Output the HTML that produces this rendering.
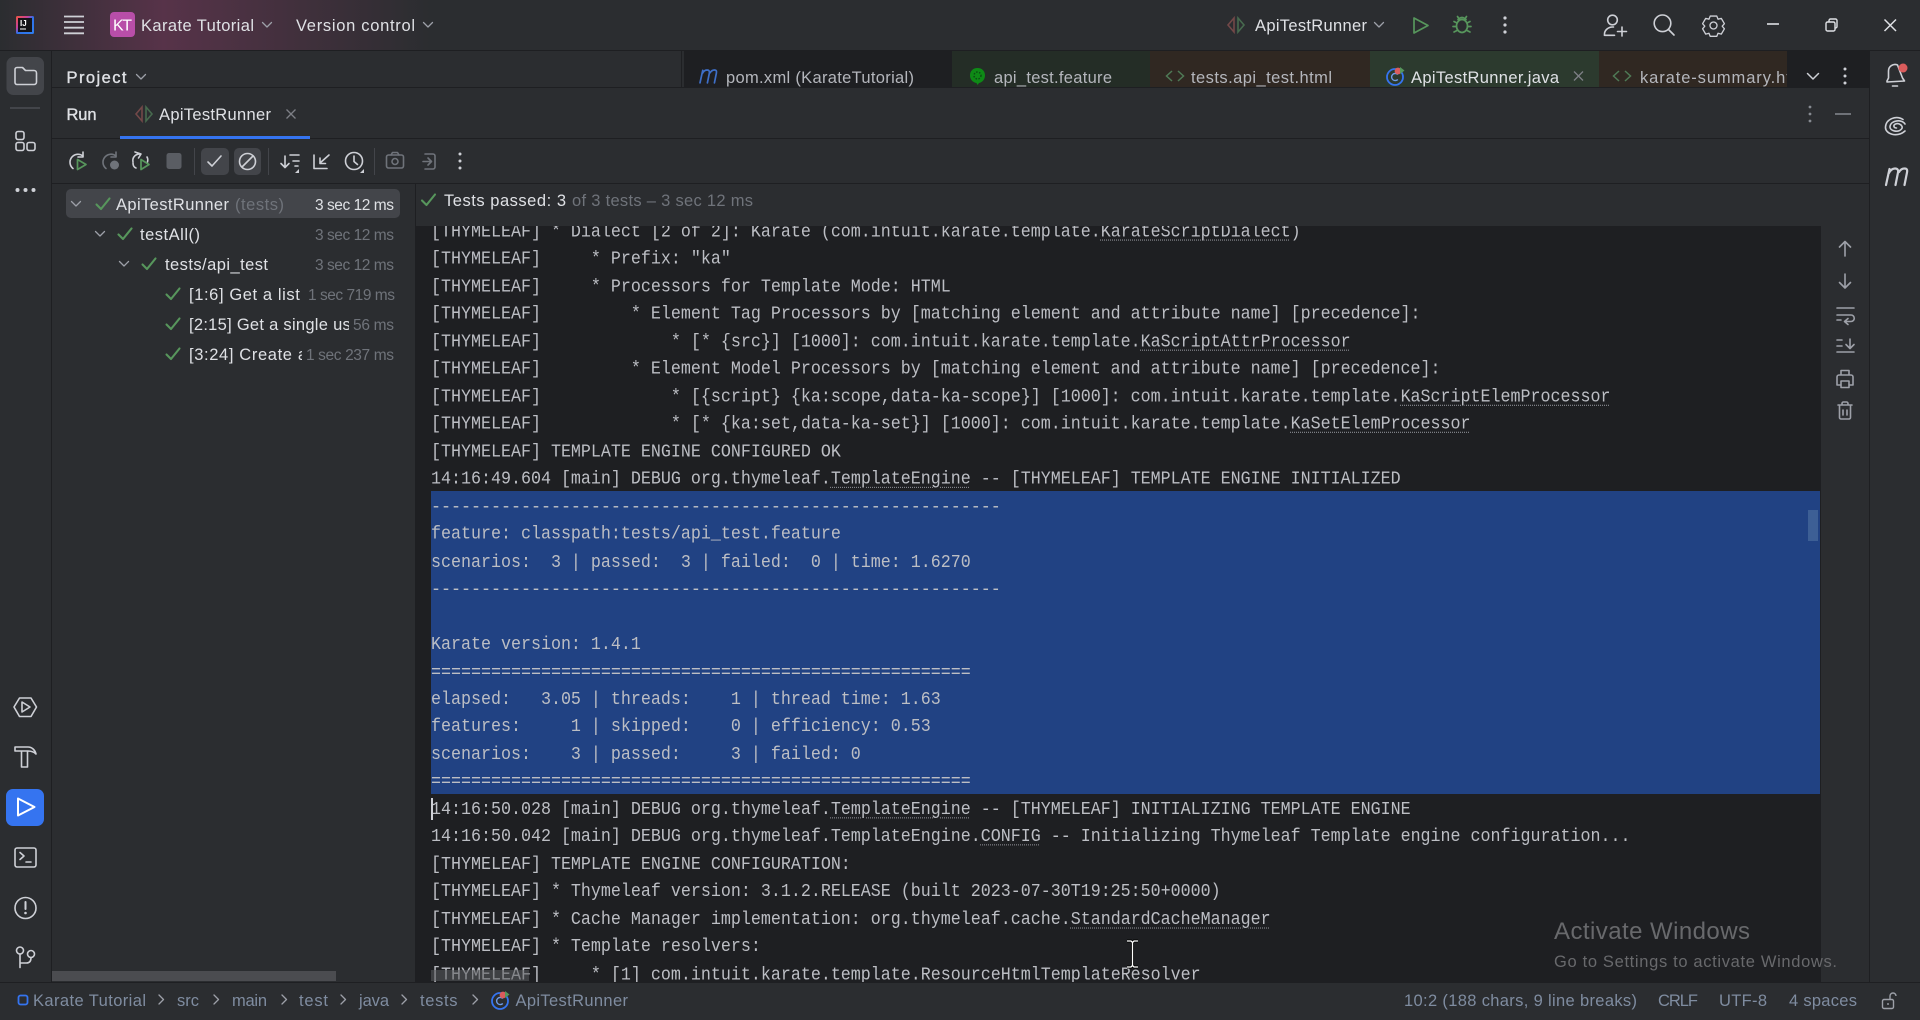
<!DOCTYPE html>
<html><head><meta charset="utf-8"><title>ApiTestRunner</title>
<style>
html,body{margin:0;padding:0;background:#2b2d30;width:1920px;height:1020px;overflow:hidden}
svg{position:absolute;left:0;top:0;display:block}
svg text{font-family:"Liberation Sans",sans-serif;font-size:16.5px;fill:#dfe1e5;white-space:pre}
.dim{fill:#b4b6bc}.g{fill:#6f737a}.st{fill:#7f8ca0}
.med{stroke:#dfe1e5;stroke-width:.35px}
.ic{fill:none;stroke:#ced0d6;stroke-width:1.6;stroke-linecap:round;stroke-linejoin:round}
.id{fill:none;stroke:#6f737a;stroke-width:1.6;stroke-linecap:round;stroke-linejoin:round}
.ck{fill:none;stroke:#57965c;stroke-width:2.1;stroke-linecap:round;stroke-linejoin:round}
.gr{fill:none;stroke:#57965c;stroke-width:1.7;stroke-linecap:round;stroke-linejoin:round}
.cr{fill:none;stroke:#9da0a8;stroke-width:1.3;stroke-linecap:round;stroke-linejoin:round}
#con{position:absolute;left:416px;top:226px;width:1405px;height:756px;background:#1e1f22;overflow:hidden}
#sel{position:absolute;left:15px;top:265px;width:1389px;height:302.5px;background:#214283}
#txt{position:absolute;left:15px;top:-7.5px;margin:0;font:16.67px/25.463px "Liberation Mono",monospace;color:#bcbec4;white-space:pre;transform:scaleY(1.08);transform-origin:0 0}
#txt u{text-decoration:underline dotted #8a8c92 1px;text-underline-offset:3px}
</style></head><body>
<svg width="1920" height="1020" viewBox="0 0 1920 1020">
<defs>
<linearGradient id="tg" gradientUnits="userSpaceOnUse" x1="0" y1="0" x2="430" y2="0"><stop offset="0" stop-color="#2b2d30"/><stop offset=".38" stop-color="#573349"/><stop offset="1" stop-color="#2b2d30"/></linearGradient>
<linearGradient id="lg" x1="0" y1="0" x2="1" y2="1"><stop offset="0" stop-color="#f0563f"/><stop offset=".35" stop-color="#c6409a"/><stop offset=".5" stop-color="#2f6fe8"/><stop offset="1" stop-color="#2f7ff0"/></linearGradient>
<path id="ck" class="ck" d="M-6.5 0.5L-2 5L6.5-5.5"/>
<path id="car" class="cr" d="M-4.5-2.5L0 2L4.500-2.500"/>
<g id="html"><path d="M-3-5L-8.500 0L-3 5M3-5L8.500 0L3 5" fill="none" stroke="#4f7a56" stroke-width="1.500"/></g>
<g id="cls"><circle cx="0" cy="0" r="8" fill="none" stroke="#3574f0" stroke-width="1.800"/><path d="M2.800-2.500A3.600 3.600 0 1 0 2.800 2.500" fill="none" stroke="#6f9be8" stroke-width="1.400"/><circle cx="3" cy="-6" r="3.400" fill="#db5c5c"/><path d="M5-10L9.500-6.500L5-3z" fill="#57965c"/></g>
<g id="runner"><path d="M-2-7L-8 0L-2 7z" fill="none" stroke="#734848" stroke-width="1.600"/><path d="M2-7L8 0L2 7z" fill="none" stroke="#476a4e" stroke-width="1.600"/></g>
<clipPath id="c1"><rect x="180" y="280" width="124" height="30"/></clipPath>
<clipPath id="c2"><rect x="180" y="310" width="169" height="30"/></clipPath>
<clipPath id="c3"><rect x="180" y="340" width="122" height="30"/></clipPath>
<clipPath id="c4"><rect x="1630" y="51" width="157" height="36"/></clipPath>
</defs>
<rect width="1920" height="1020" fill="#2b2d30"/>
<rect width="430" height="50" fill="url(#tg)"/>
<rect y="50" width="1920" height="1" fill="#1e1f22"/>
<rect x="51" y="51" width="1" height="932" fill="#1e1f22"/>
<rect x="1869" y="51" width="1" height="932" fill="#1e1f22"/>
<rect x="52" y="87" width="1817" height="1" fill="#1e1f22"/>
<rect x="52" y="138" width="1817" height="1" fill="#1e1f22"/>
<rect x="52" y="183" width="1817" height="1" fill="#1e1f22"/>
<rect x="415" y="184" width="1" height="798" fill="#1e1f22"/>
<rect y="982" width="1920" height="1" fill="#1e1f22"/>

<!-- title bar -->
<rect x="16" y="16" width="18" height="18" rx="1.500" fill="url(#lg)"/><rect x="18" y="18" width="14" height="14" fill="#141418"/>
<text x="20" y="26" style="font-size:8px;font-weight:bold;fill:#fff">IJ</text><rect x="20" y="28.500" width="6" height="1" fill="#fff"/>
<path d="M64 16.500H84M64 22H84M64 27.700H84M64 33.300H84" fill="none" stroke="#ced0d6" stroke-width="1.800"/>
<rect x="110" y="12" width="25" height="25" rx="4" fill="#b84ea8"/>
<text x="113" y="30.500" style="font-size:16px;fill:#fff" textLength="19">KT</text>
<text x="141" y="31" textLength="113">Karate Tutorial</text><use href="#car" x="267" y="25"/>
<text x="296" y="31" textLength="119">Version control</text><use href="#car" x="428" y="25"/>
<use href="#runner" x="1236" y="25"/>
<text x="1255" y="31" textLength="112">ApiTestRunner</text><use href="#car" x="1379" y="25"/>
<path class="gr" d="M1414 18L1428 25.500L1414 33z"/>
<g class="gr"><ellipse cx="1462" cy="26" rx="5.500" ry="6.500"/><path d="M1458 19.500q4-4 8 0M1457.500 16.500l2 3M1466.500 16.500l-2 3M1454 21.500l3 1.500M1470 21.500l-3 1.500M1453 26.500h3.500M1471 26.500h-3.500M1454 32l3-1.500M1470 32l-3-1.500"/></g>
<circle cx="1505" cy="18" r="1.600" fill="#ced0d6"/><circle cx="1505" cy="25" r="1.600" fill="#ced0d6"/><circle cx="1505" cy="32" r="1.600" fill="#ced0d6"/>
<g class="ic" transform="translate(-1.500 0)"><circle cx="1614" cy="20" r="4.800"/><path d="M1606 35v-1c0-4 4-7 8-7h1M1619 31.500h9M1623.500 27v9"/><path d="M1606 35.300h10"/></g>
<g class="ic"><circle cx="1662.500" cy="23.300" r="8.300"/><path d="M1668.500 29.500l5.500 5.500"/></g>
<g class="ic" transform="translate(1713.500 25.500) scale(.82) translate(-1714 -26)"><path d="M1710 14.500h8l1.500 3.800 4-1 3.800 6.500-2.700 3 2.700 3.200-3.800 6.500-4-1-1.500 3.700h-8l-1.500-3.700-4 1-3.800-6.500 2.700-3.200-2.700-3 3.800-6.500 4 1z"/><circle cx="1714" cy="26" r="4.300"/></g>
<path d="M1767 24h12" stroke="#dfe1e5" stroke-width="1.600"/>
<g fill="none" stroke="#dfe1e5" stroke-width="1.400"><rect x="1826" y="22" width="9" height="9" rx="1.500"/><path d="M1829 21.500v-1a1.500 1.500 0 0 1 1.500-1.500h5a1.500 1.500 0 0 1 1.500 1.500v6a1.500 1.500 0 0 1-1.500 1.500"/></g>
<path d="M1884.500 19.500l11.500 11.500M1896 19.500l-11.500 11.500" stroke="#dfe1e5" stroke-width="1.500"/>

<!-- left rail -->
<rect x="6.500" y="57" width="37.500" height="38" rx="7" fill="#43454a"/>
<path class="ic" d="M15 69.500a2 2 0 0 1 2-2h5.500l3 3H34a2.500 2.500 0 0 1 2.500 2.500v9a2.500 2.500 0 0 1-2.500 2.500H17a2 2 0 0 1-2-2z"/>
<rect x="10" y="107" width="30" height="2" fill="#43454a"/>
<g class="ic"><rect x="16" y="131.500" width="8" height="8" rx="2"/><rect x="16" y="142.500" width="8" height="8" rx="2"/><rect x="27" y="142.500" width="8" height="8" rx="2"/></g>
<circle cx="17.500" cy="190" r="2" fill="#ced0d6"/><circle cx="25.500" cy="190" r="2" fill="#ced0d6"/><circle cx="33.500" cy="190" r="2" fill="#ced0d6"/>
<g class="ic"><path d="M19.500 698h11.500l5.500 9-5.500 9.500H19.500L14 707z"/><path d="M22 702l8 5-8 5z"/></g>
<path class="ic" d="M15 747h13c4 0 7 3 8 7-2-2-5-3-8-3h-13zM21.500 751.500v15.500h6v-15.500"/>
<rect x="6" y="789" width="38" height="37" rx="7" fill="#3574f0"/>
<path d="M18 798.500v17L34.500 807z" fill="none" stroke="#fff" stroke-width="2" stroke-linejoin="round"/>
<g class="ic"><rect x="15" y="848" width="21" height="19" rx="2"/><path d="M20 852.500l4 3.500-4 3.500M26 862h5"/></g>
<g class="ic"><circle cx="25.500" cy="908" r="10.500"/></g><path d="M25.500 902v7" stroke="#ced0d6" stroke-width="2" stroke-linecap="round"/><circle cx="25.500" cy="913" r="1.300" fill="#ced0d6"/>
<g class="ic"><circle cx="20" cy="950.500" r="3.500"/><circle cx="31" cy="954" r="3.500"/><path d="M20 954v13.500M20 963h6.500q4.500 0 4.500-5.500"/></g>

<!-- project header and tabs -->
<text class="med" x="66.500" y="83" textLength="60">Project</text><use href="#car" x="141" y="77"/>
<rect x="684" y="51" width="268" height="36" fill="#1e1f22"/>
<rect x="681" y="51" width="1" height="36" fill="#1e1f22"/>
<rect x="952" y="51" width="198" height="36" fill="#242d26"/>
<rect x="1150" y="51" width="220" height="36" fill="#302822"/>
<rect x="1370" y="51" width="229" height="36" fill="#2c3a2e"/>
<rect x="1599" y="51" width="188" height="36" fill="#302822"/>
<rect x="1787" y="51" width="82" height="36" fill="#1e1f22"/>
<path transform="translate(700 70) scale(.78) translate(-1886 -168.500)" d="M1886 185l3.500-16M1889 173c1.500-3 4-4.500 6-4.500 2.500 0 3.500 1.500 3 4l-2.500 12.500M1899 172c1.500-2.500 3.500-3.500 5.500-3.500 2.500 0 3 1.500 2.500 4l-2.500 12.500" fill="none" stroke="#3e6fc8" stroke-width="2.200" stroke-linecap="round"/>
<text class="dim" x="726" y="83" textLength="188">pom.xml (KarateTutorial)</text>
<path d="M977.500 68c4.500 0 7.500 3 7.500 7.500 0 4-3 7-6 7.500l-1.500 2-1-2c-3.500-.5-6.500-3.500-6.500-7.500 0-4.500 3-7.500 7.500-7.500z" fill="#0e8a16"/><circle cx="977.500" cy="75.500" r="3.500" fill="none" stroke="#0a4d12" stroke-width="1.500" stroke-dasharray="1.500 1.500"/>
<text class="dim" x="994" y="83" textLength="118">api_test.feature</text>
<use href="#html" x="1175" y="76"/>
<text class="dim" x="1191" y="83" textLength="141">tests.api_test.html</text>
<use href="#cls" x="1395" y="77"/>
<text x="1411" y="83" textLength="148">ApiTestRunner.java</text>
<path d="M1574 71.500l9 9M1583 71.500l-9 9" stroke="#7d7f85" stroke-width="1.300"/>
<use href="#html" x="1622" y="76"/>
<text class="dim" x="1640" y="83" textLength="170" clip-path="url(#c4)">karate-summary.html</text>
<path class="cr" style="stroke:#ced0d6;stroke-width:1.500" d="M1807.500 73.500l5.500 5.500 5.500-5.500"/>
<circle cx="1845" cy="69" r="1.500" fill="#ced0d6"/><circle cx="1845" cy="76" r="1.500" fill="#ced0d6"/><circle cx="1845" cy="83" r="1.500" fill="#ced0d6"/>

<!-- right rail -->
<g class="ic"><path d="M1887 82v-1l1.500-3v-7a6.500 6.500 0 0 1 9-6l5 13 2 3z"/><path d="M1892.500 86h5"/></g>
<circle cx="1903" cy="68" r="4.500" fill="#db5c5c"/>
<g class="ic"><path d="M1903 119.500C1896 115 1886 119 1885.500 127C1885 134 1897 138 1905 131"/><path d="M1905 124C1902 119 1891 120 1890 126.500C1889.500 131 1898 133 1901.500 129C1904 126 1899 122.500 1895.500 124C1893 125 1893.500 128 1896.500 128"/></g>
<path d="M1886 185l3.500-16M1889 173c1.500-3 4-4.500 6-4.500 2.500 0 3.500 1.500 3 4l-2.500 12.500M1899 172c1.500-2.500 3.500-3.500 5.500-3.500 2.500 0 3 1.500 2.500 4l-2.500 12.500" fill="none" stroke="#ced0d6" stroke-width="2.200" stroke-linecap="round"/>

<!-- run tabs -->
<text class="med" x="66.500" y="120" textLength="30">Run</text>
<use href="#runner" x="144" y="114"/>
<text x="159" y="120" textLength="112">ApiTestRunner</text>
<path d="M286.500 109.500l9 9M295.500 109.500l-9 9" stroke="#7d7f85" stroke-width="1.300"/>
<rect x="120" y="136" width="190" height="3" fill="#3574f0"/>
<circle cx="1810" cy="107" r="1.400" fill="#868a91"/><circle cx="1810" cy="114" r="1.400" fill="#868a91"/><circle cx="1810" cy="121" r="1.400" fill="#868a91"/>
<path d="M1835 114h16" stroke="#868a91" stroke-width="1.500"/>

<!-- toolbar -->
<g class="ic"><path d="M83 156a8 8 0 1 0-10 12.500"/><path d="M83 152v5h-5"/></g><path class="gr" d="M77.500 159.500l8.500 5-8.500 5z"/>
<g class="id"><path d="M116 156a8 8 0 1 0-10 12.500"/><path d="M116 152v5h-5"/></g><circle cx="114.500" cy="165" r="4.500" fill="#6f737a"/>
<g class="ic"><path d="M141 154c-5-.5-9 3-8 8M135 152l6 2-2.500 4M147 157c1 1.500 1 3 .5 5"/><path d="M136 168c-3-1-3-4-3-5"/></g><path class="gr" d="M141 159.500l8 5-8 5z"/>
<rect x="166.500" y="153" width="15" height="16" rx="2.500" fill="#5a5d63"/>
<rect x="194" y="148" width="1" height="27" fill="#43454a"/>
<rect x="201" y="148" width="28" height="27" rx="5" fill="#43454a"/>
<path class="ic" d="M208 162l4 4 9-10"/>
<rect x="234" y="148" width="27" height="27" rx="5" fill="#43454a"/>
<g class="ic"><circle cx="247.500" cy="161.500" r="8"/><path d="M242 167l11-11"/></g>
<rect x="268" y="148" width="1" height="27" fill="#43454a"/>
<g class="ic"><path d="M285 156v11M281 163.500l4 4 4-4M290 155h9M293 161h6M295 166h3"/></g><path d="M295 173l4-4v4z" fill="#ced0d6"/>
<g class="ic"><path d="M314 155v13.500h13M329 155l-9 8M320 158v5.500h5.500"/></g>
<g class="ic"><circle cx="354" cy="161" r="8.500"/><path d="M354 156v5.500l3.500 3"/></g><path d="M360 173l4-4v4z" fill="#ced0d6"/>
<rect x="374" y="148" width="1" height="27" fill="#43454a"/>
<g class="id"><rect x="386.500" y="155" width="17" height="13" rx="2"/><circle cx="395" cy="161.500" r="3"/><path d="M391 155l1.500-2.500h5L399 155"/></g>
<g class="id"><path d="M425 154h8a2 2 0 0 1 2 2v11a2 2 0 0 1-2 2h-8M423 161.500h8M428 158l3.500 3.500-3.500 3.500"/></g>
<circle cx="460" cy="154" r="1.500" fill="#ced0d6"/><circle cx="460" cy="161" r="1.500" fill="#ced0d6"/><circle cx="460" cy="168" r="1.500" fill="#ced0d6"/>

<!-- tree -->
<rect x="66" y="189" width="334" height="29" rx="5" fill="#43454a"/>
<use href="#car" x="76" y="204"/><use href="#ck" x="103" y="204"/>
<text x="116" y="210" textLength="113">ApiTestRunner</text><text class="g" x="235" y="210" textLength="49">(tests)</text>
<text x="315" y="210" style="font-size:15.500px" textLength="79">3 sec 12 ms</text>
<use href="#car" x="100" y="234"/><use href="#ck" x="125" y="234"/>
<text x="140" y="240" textLength="60">testAll()</text><text class="g" x="315" y="240" style="font-size:15.500px" textLength="79">3 sec 12 ms</text>
<use href="#car" x="124" y="264"/><use href="#ck" x="149" y="264"/>
<text x="165" y="270" textLength="103">tests/api_test</text><text class="g" x="315" y="270" style="font-size:15.500px" textLength="79">3 sec 12 ms</text>
<use href="#ck" x="173" y="294"/>
<text x="189" y="300" clip-path="url(#c1)" textLength="131">[1:6] Get a list of</text><text class="g" x="308" y="300" style="font-size:15.500px" textLength="87">1 sec 719 ms</text>
<use href="#ck" x="173" y="324"/>
<text x="189" y="330" clip-path="url(#c2)" textLength="177">[2:15] Get a single user</text><text class="g" x="353" y="330" style="font-size:15.500px" textLength="41">56 ms</text>
<use href="#ck" x="173" y="354"/>
<text x="189" y="360" clip-path="url(#c3)" textLength="118">[3:24] Create a</text><text class="g" x="306" y="360" style="font-size:15.500px" textLength="88">1 sec 237 ms</text>
<rect x="52" y="971" width="284" height="10" fill="#4b4c50"/>

<!-- results header -->
<use href="#ck" x="428.500" y="200"/>
<text x="444" y="206" textLength="122">Tests passed: 3</text>
<text class="g" x="572" y="206" textLength="181">of 3 tests – 3 sec 12 ms</text>

<!-- right tools -->
<g class="ic" style="stroke:#9da0a8"><path d="M1845 256v-14M1839.500 247l5.500-5.500 5.500 5.500"/><path d="M1845 274v14M1839.500 282.500l5.500 5.500 5.500-5.500"/>
<path d="M1837 308h17M1837 315h14a3 3 0 0 1 0 6.500h-6M1848 318.500l-3.500 3 3.500 3M1837 320h4"/>
<path d="M1837 340h5M1837 346h5M1837 352h17M1850 339v9M1846 344.500l4 4 4-4"/>
<path d="M1841 375v-4.500h8v4.500M1841 385h-4v-8a2 2 0 0 1 2-2h12a2 2 0 0 1 2 2v8h-4M1841 381h8v6.500h-8z"/>
<path d="M1838 405h14M1842 405v-1.500a1.500 1.500 0 0 1 1.500-1.500h3a1.500 1.500 0 0 1 1.500 1.500v1.500M1839.500 405.500v12a1.500 1.500 0 0 0 1.500 1.500h8a1.500 1.500 0 0 0 1.500-1.500v-12M1843 410v5M1847 410v5"/></g>

<!-- status bar -->
<rect x="18.500" y="995.500" width="9" height="9" rx="2" fill="none" stroke="#3574f0" stroke-width="1.800"/>
<text class="st" x="33" y="1006" textLength="113">Karate Tutorial</text>
<text class="st" x="177" y="1006" textLength="22">src</text>
<text class="st" x="232" y="1006" textLength="35">main</text>
<text class="st" x="299" y="1006" textLength="29">test</text>
<text class="st" x="359" y="1006" textLength="30">java</text>
<text class="st" x="420" y="1006" textLength="37.500">tests</text>
<text class="st" x="515.500" y="1006" textLength="112.500">ApiTestRunner</text>
<text class="st" x="1404" y="1006" textLength="233">10:2 (188 chars, 9 line breaks)</text>
<text class="st" x="1658" y="1006" textLength="40">CRLF</text>
<text class="st" x="1719" y="1006" textLength="48">UTF-8</text>
<text class="st" x="1789" y="1006" textLength="68">4 spaces</text>
<g class="cr"><path d="M159 995l4.500 4.500-4.500 4.500M214 995l4.500 4.500-4.500 4.500M282 995l4.500 4.500-4.500 4.500M341 995l4.500 4.500-4.500 4.500M402 995l4.500 4.500-4.500 4.500M473 995l4.500 4.500-4.500 4.500"/></g>
<use href="#cls" x="500" y="1001"/>
<g fill="none" stroke="#9da0a8" stroke-width="1.400"><rect x="1882.500" y="999.500" width="11" height="9" rx="1.500"/><path d="M1890 999.500v-3.500a3 3 0 0 1 6 0"/><path d="M1888 1003v2"/></g>
</svg>

<div id="con"><div id="sel"></div><pre id="txt">[THYMELEAF] * Dialect [2 of 2]: Karate (com.intuit.karate.template.<u>KarateScriptDialect</u>)
[THYMELEAF]     * Prefix: "ka"
[THYMELEAF]     * Processors for Template Mode: HTML
[THYMELEAF]         * Element Tag Processors by [matching element and attribute name] [precedence]:
[THYMELEAF]             * [* {src}] [1000]: com.intuit.karate.template.<u>KaScriptAttrProcessor</u>
[THYMELEAF]         * Element Model Processors by [matching element and attribute name] [precedence]:
[THYMELEAF]             * [{script} {ka:scope,data-ka-scope}] [1000]: com.intuit.karate.template.<u>KaScriptElemProcessor</u>
[THYMELEAF]             * [* {ka:set,data-ka-set}] [1000]: com.intuit.karate.template.<u>KaSetElemProcessor</u>
[THYMELEAF] TEMPLATE ENGINE CONFIGURED OK
14:16:49.604 [main] DEBUG org.thymeleaf.<u>TemplateEngine</u> -- [THYMELEAF] TEMPLATE ENGINE INITIALIZED
---------------------------------------------------------
feature: classpath:tests/api_test.feature
scenarios:  3 | passed:  3 | failed:  0 | time: 1.6270
---------------------------------------------------------

Karate version: 1.4.1
======================================================
elapsed:   3.05 | threads:    1 | thread time: 1.63
features:     1 | skipped:    0 | efficiency: 0.53
scenarios:    3 | passed:     3 | failed: 0
======================================================
14:16:50.028 [main] DEBUG org.thymeleaf.<u>TemplateEngine</u> -- [THYMELEAF] INITIALIZING TEMPLATE ENGINE
14:16:50.042 [main] DEBUG org.thymeleaf.TemplateEngine.<u>CONFIG</u> -- Initializing Thymeleaf Template engine configuration...
[THYMELEAF] TEMPLATE ENGINE CONFIGURATION:
[THYMELEAF] * Thymeleaf version: 3.1.2.RELEASE (built 2023-07-30T19:25:50+0000)
[THYMELEAF] * Cache Manager implementation: org.thymeleaf.cache.<u>StandardCacheManager</u>
[THYMELEAF] * Template resolvers:
[THYMELEAF]     * [1] com.intuit.karate.template.<u>ResourceHtmlTemplateResolver</u></pre></div>

<svg width="1920" height="1020" viewBox="0 0 1920 1020" style="pointer-events:none">
<rect x="431" y="798" width="2" height="22" fill="#ced0d6"/>
<rect x="431" y="970" width="98" height="11" fill="#5a5b5f" opacity=".55"/>
<rect x="1808" y="510" width="10" height="31" fill="#3d5f95"/>
<path d="M1127 941h4l1.500 1.500 1.500-1.500h4M1132.500 942v24M1127 967h4l1.500-1.500 1.500 1.500h4" fill="none" stroke="#000" stroke-width="3"/>
<path d="M1127 941h4l1.500 1.500 1.500-1.500h4M1132.500 942v24M1127 967h4l1.500-1.500 1.500 1.500h4" fill="none" stroke="#fff" stroke-width="1.300"/>
<text x="1554" y="939" style="font-size:24px;fill:#68696c" textLength="196">Activate Windows</text>
<text x="1554" y="967" style="font-size:16.500px;fill:#68696c" textLength="283">Go to Settings to activate Windows.</text>
</svg>
</body></html>
